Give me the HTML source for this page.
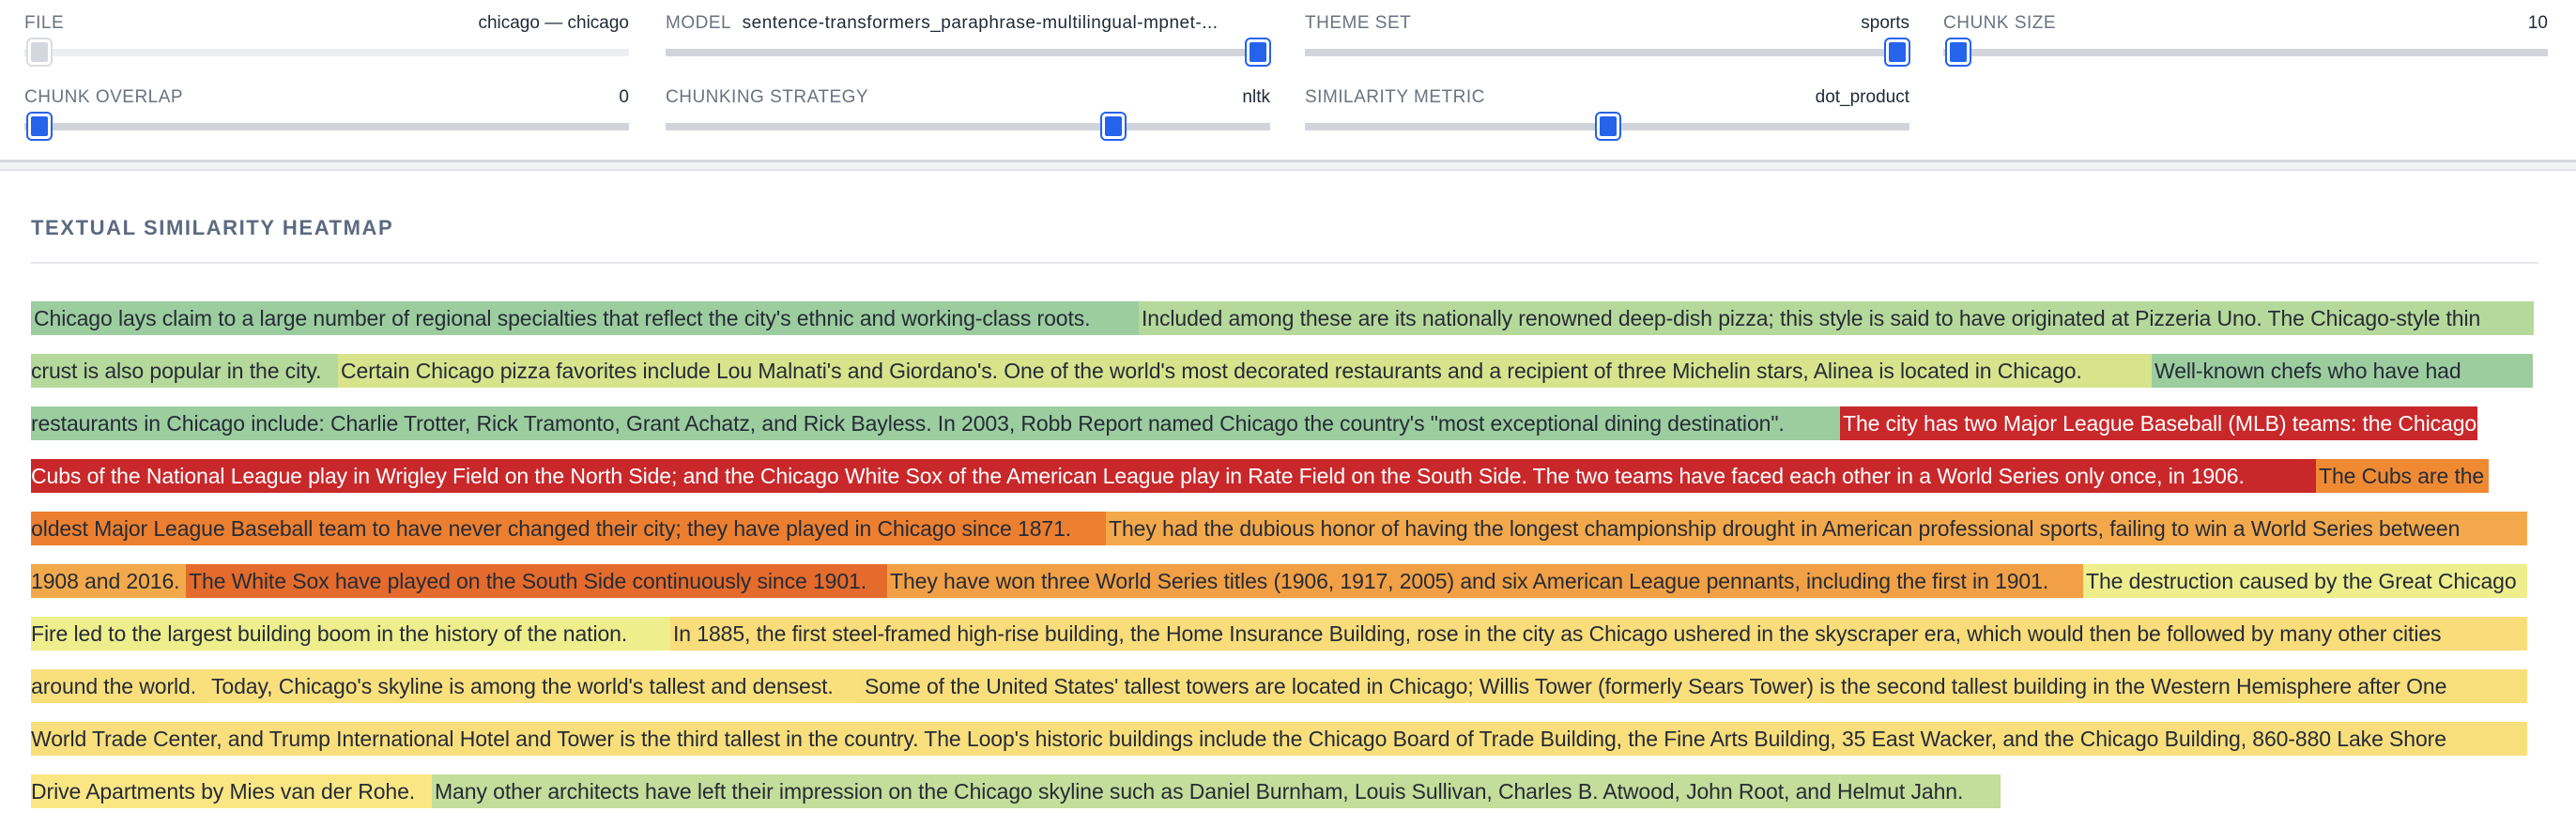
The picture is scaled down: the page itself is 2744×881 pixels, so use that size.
<!DOCTYPE html>
<html><head><meta charset="utf-8"><style>
*{margin:0;padding:0;box-sizing:border-box}
body{width:2744px;height:881px;background:#fff;font-family:"Liberation Sans",sans-serif;position:relative;overflow:hidden}
.ctl{position:absolute;width:644px}
.lab{position:absolute;top:0;left:0;font-size:19px;color:#6b7280;letter-spacing:.5px;white-space:nowrap}
.val{position:absolute;top:0;right:0;font-size:19px;color:#1f2937;white-space:nowrap}
.trk{position:absolute;left:0;width:644px;height:8px;background:#d1d5db;top:38px}
.thumb{position:absolute;width:28px;height:31px;top:26px;border:2px solid #2563eb;border-radius:6px;background:#fff}
.thumb:after{content:"";position:absolute;left:3px;top:3px;right:3px;bottom:3px;background:#2563eb;border-radius:2px}
.dis .trk{background:#eceef1}
.dis .thumb{border-color:#d9dce1}
.dis .thumb:after{background:#d4d7dd}
.line{position:absolute;left:33px;height:36px;white-space:nowrap;display:flex}
.line span{display:block;height:36px;line-height:36px;font-size:23px;color:#262b36;overflow:hidden;padding-left:3px;letter-spacing:-.1px}
.w{color:#fff!important}
</style></head><body>
<div class="ctl dis" style="left:26px;top:14px"><div class="lab">FILE</div><div class="val">chicago — chicago</div><div class="trk"></div><div class="thumb" style="left:2px"></div></div>
<div class="ctl" style="left:709px;top:14px"><div class="lab">MODEL&nbsp; <span style="color:#1f2937">sentence-transformers_paraphrase-multilingual-mpnet-...</span></div><div class="trk"></div><div class="thumb" style="left:617px"></div></div>
<div class="ctl" style="left:1390px;top:14px"><div class="lab">THEME SET</div><div class="val">sports</div><div class="trk"></div><div class="thumb" style="left:617px"></div></div>
<div class="ctl" style="left:2070px;top:14px"><div class="lab">CHUNK SIZE</div><div class="val">10</div><div class="trk"></div><div class="thumb" style="left:2px"></div></div>
<div class="ctl" style="left:26px;top:93px"><div class="lab">CHUNK OVERLAP</div><div class="val">0</div><div class="trk"></div><div class="thumb" style="left:2px"></div></div>
<div class="ctl" style="left:709px;top:93px"><div class="lab">CHUNKING STRATEGY</div><div class="val">nltk</div><div class="trk"></div><div class="thumb" style="left:463px"></div></div>
<div class="ctl" style="left:1390px;top:93px"><div class="lab">SIMILARITY METRIC</div><div class="val">dot_product</div><div class="trk"></div><div class="thumb" style="left:309px"></div></div>
<div style="position:absolute;left:0;top:170px;width:2744px;height:12px;background:#f3f4f6;border-top:3px solid #d6d8dc;border-bottom:2px solid #dfe1e5"></div>
<div style="position:absolute;left:33px;top:230px;font-size:22px;font-weight:bold;color:#5b6a80;letter-spacing:1.6px">TEXTUAL SIMILARITY HEATMAP</div>
<div style="position:absolute;left:33px;top:279px;width:2671px;height:2px;background:#e5e7eb"></div>

<div class="line" style="top:321px"><span style="width:1180px;background:#9ccd9f">Chicago lays claim to a large number of regional specialties that reflect the city's ethnic and working-class roots.</span><span style="width:1486px;background:#b5d99a">Included among these are its nationally renowned deep-dish pizza; this style is said to have originated at Pizzeria Uno. The Chicago-style thin</span></div>
<div class="line" style="top:377px"><span style="width:327px;background:#b5d99a;padding-left:0">crust is also popular in the city.</span><span style="width:1932px;background:#d7e48c">Certain Chicago pizza favorites include Lou Malnati's and Giordano's. One of the world's most decorated restaurants and a recipient of three Michelin stars, Alinea is located in Chicago.</span><span style="width:406px;background:#9ccd9f">Well-known chefs who have had</span></div>
<div class="line" style="top:433px"><span style="width:1927px;background:#9ccd9f;padding-left:0">restaurants in Chicago include: Charlie Trotter, Rick Tramonto, Grant Achatz, and Rick Bayless. In 2003, Robb Report named Chicago the country's "most exceptional dining destination".</span><span class="w" style="width:679px;background:#c9282b">The city has two Major League Baseball (MLB) teams: the Chicago</span></div>
<div class="line" style="top:489px"><span class="w" style="width:2434px;background:#c9282b;padding-left:0">Cubs of the National League play in Wrigley Field on the North Side; and the Chicago White Sox of the American League play in Rate Field on the South Side. The two teams have faced each other in a World Series only once, in 1906.</span><span style="width:184px;background:#ef8a33">The Cubs are the</span></div>
<div class="line" style="top:545px"><span style="width:1145px;background:#ec7f2f;padding-left:0">oldest Major League Baseball team to have never changed their city; they have played in Chicago since 1871.</span><span style="width:1514px;background:#f3a94b">They had the dubious honor of having the longest championship drought in American professional sports, failing to win a World Series between</span></div>
<div class="line" style="top:601px"><span style="width:165px;background:#f3a94b;padding-left:0">1908 and 2016.</span><span style="width:747px;background:#e46b2c">The White Sox have played on the South Side continuously since 1901.</span><span style="width:1274px;background:#f1a045">They have won three World Series titles (1906, 1917, 2005) and six American League pennants, including the first in 1901.</span><span style="width:473px;background:#eeee8c">The destruction caused by the Great Chicago</span></div>
<div class="line" style="top:657px"><span style="width:681px;background:#eeee8c;padding-left:0">Fire led to the largest building boom in the history of the nation.</span><span style="width:1978px;background:#f8dd7a">In 1885, the first steel-framed high-rise building, the Home Insurance Building, rose in the city as Chicago ushered in the skyscraper era, which would then be followed by many other cities</span></div>
<div class="line" style="top:713px"><span style="width:189px;background:#f8df7c;padding-left:0">around the world.</span><span style="width:696px;background:#f9e07c">Today, Chicago's skyline is among the world's tallest and densest.</span><span style="width:1774px;background:#f8df7c">Some of the United States' tallest towers are located in Chicago; Willis Tower (formerly Sears Tower) is the second tallest building in the Western Hemisphere after One</span></div>
<div class="line" style="top:769px"><span style="width:2659px;background:#f8df7c;padding-left:0">World Trade Center, and Trump International Hotel and Tower is the third tallest in the country. The Loop's historic buildings include the Chicago Board of Trade Building, the Fine Arts Building, 35 East Wacker, and the Chicago Building, 860-880 Lake Shore</span></div>
<div class="line" style="top:825px"><span style="width:427px;background:#fae784;padding-left:0">Drive Apartments by Mies van der Rohe.</span><span style="width:1671px;background:#c2de9a">Many other architects have left their impression on the Chicago skyline such as Daniel Burnham, Louis Sullivan, Charles B. Atwood, John Root, and Helmut Jahn.</span></div>
</body></html>
